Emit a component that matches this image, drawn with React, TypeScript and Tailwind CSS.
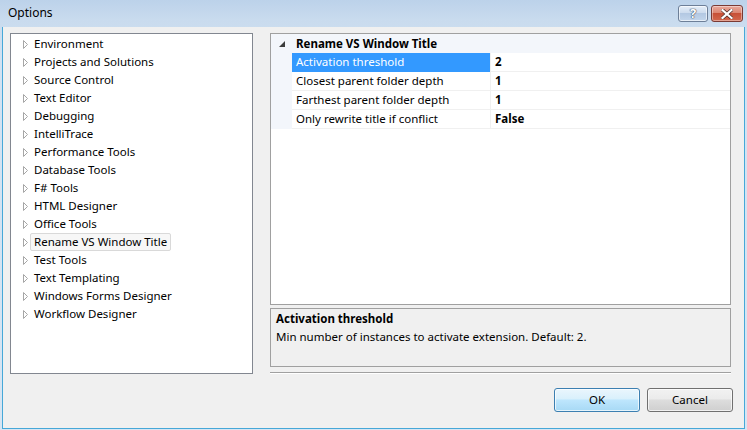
import React from "react";

const treeItems = [
  "Environment",
  "Projects and Solutions",
  "Source Control",
  "Text Editor",
  "Debugging",
  "IntelliTrace",
  "Performance Tools",
  "Database Tools",
  "F# Tools",
  "HTML Designer",
  "Office Tools",
  "Rename VS Window Title",
  "Test Tools",
  "Text Templating",
  "Windows Forms Designer",
  "Workflow Designer",
];

const props = [
  { name: "Activation threshold", value: "2", selected: true },
  { name: "Closest parent folder depth", value: "1" },
  { name: "Farthest parent folder depth", value: "1" },
  { name: "Only rewrite title if conflict", value: "False" },
];

function Expander() {
  return (
    <svg width="6" height="9" viewBox="0 0 6 9" className="shrink-0">
      <path d="M0.5 0.5 L4.5 4.5 L0.5 8.5 Z" fill="#ffffff" stroke="#a6a6a6" strokeWidth="1" />
    </svg>
  );
}

export default function App() {
  return (
    <div
      className="w-[747px] h-[430px] flex flex-col bg-[linear-gradient(180deg,#bcd2ea_0px,#c9dbee_20px,#d2e2f2_60px,#d7e5f3_430px)] text-[11.5px] text-black overflow-hidden"
      style={{ fontFamily: '"Noto Sans", "Segoe UI", sans-serif' }}
    >
      {/* title bar */}
      <div className="h-[27px] shrink-0 flex items-start relative">
        <span className="pl-[8px] pt-[5px] leading-[16px] text-[12px] text-black">Options</span>
        <div className="absolute left-[678px] top-[5px] w-[30px] h-[17px] rounded-[3px] border border-[#6d7f98] bg-[linear-gradient(180deg,#e5eef8_0%,#cddcee_45%,#b3c8e2_50%,#c3d6ec_100%)] flex items-center justify-center shadow-[inset_0_0_0_1px_rgba(255,255,255,0.6)]">
          <span className="text-[13px] font-bold leading-none text-white [text-shadow:0_0_1px_#3a4a60,0_0_1px_#3a4a60,0_0_1px_#3a4a60]">?</span>
        </div>
        <div className="absolute left-[711px] top-[5px] w-[32px] h-[17px] rounded-[3px] border border-[#7a3a34] bg-[linear-gradient(180deg,#e9a99c_0%,#dc8672_45%,#c75037_50%,#d3684e_100%)] flex items-center justify-center shadow-[inset_0_0_0_1px_rgba(255,255,255,0.4)]">
          <svg width="12" height="10" viewBox="0 0 12 10">
            <path d="M1.5 1 L10.5 9 M10.5 1 L1.5 9" stroke="#4a2a26" strokeWidth="3.6" strokeLinecap="square" />
            <path d="M1.5 1 L10.5 9 M10.5 1 L1.5 9" stroke="#ffffff" strokeWidth="2.2" strokeLinecap="square" />
          </svg>
        </div>
      </div>

      {/* client */}
      <div className="flex-1 mx-[2px] mb-[1px] border-l border-r border-b border-[#46a8d8] bg-[#f0f0f0] flex flex-col">
        <div className="flex pl-[7px] pt-[6px] gap-[17px]">
          {/* tree */}
          <div className="w-[243px] h-[341px] border border-[#828790] bg-white pt-[1px]">
            {treeItems.map((t) => {
              const sel = t === "Rename VS Window Title";
              return (
                <div key={t} className="h-[18px] flex items-center pl-[12px]">
                  <Expander />
                  <div
                    className={
                      "ml-[1px] h-[18px] flex items-center px-[3px] rounded-[2px] border " +
                      (sel ? "border-[#d9d9d9] bg-[#f7f7f7]" : "border-transparent")
                    }
                  >
                    <span className="whitespace-nowrap leading-[16px]">{t}</span>
                  </div>
                </div>
              );
            })}
          </div>

          {/* right */}
          <div className="w-[461px] flex flex-col">
            <div className="h-[272px] border border-[#a0a0a0] bg-white flex flex-col">
              <div className="h-[19px] bg-[#f3f6fb] flex items-center">
                <div className="w-[22px] flex justify-center">
                  <svg width="6" height="6" viewBox="0 0 6 6">
                    <path d="M6 0 L6 6 L0 6 Z" fill="#3c3c3c" />
                  </svg>
                </div>
                <span className="font-bold pl-[3px] leading-[16px]">Rename VS Window Title</span>
              </div>
              {props.map((p) => (
                <div key={p.name} className="h-[19px] flex">
                  <div className="w-[21px] bg-[#f3f6fb]" />
                  <div
                    className={
                      "w-[198px] flex items-center pl-[4px] border-b " +
                      (p.selected ? "bg-[#3399ff] text-white border-[#3399ff]" : "border-[#f0f0f0]")
                    }
                  >
                    <span className="whitespace-nowrap leading-[16px]">{p.name}</span>
                  </div>
                  <div className="flex-1 flex items-center pl-[4px] border-l border-b border-[#f0f0f0]">
                    <span className="font-bold leading-[16px]">{p.value}</span>
                  </div>
                </div>
              ))}
            </div>
            <div className="mt-[3px] h-[59px] border border-[#a0a0a0] bg-[#f0f0f0] px-[5px] pt-[1px]">
              <div className="font-bold leading-[17px]">Activation threshold</div>
              <div className="leading-[17px] mt-[1px]">Min number of instances to activate extension. Default: 2.</div>
            </div>
            <div className="mt-[5px] h-[2px] border-t border-[#a0a0a0] border-b border-b-white" />
          </div>
        </div>

        {/* buttons */}
        <div className="flex justify-end gap-[7px] pr-[11px] mt-[14px]">
          <div className="w-[86px] h-[24px] rounded-[3px] border border-[#3c7fb1] bg-[linear-gradient(180deg,#eaf6fd_0%,#d9f0fc_45%,#bee6fd_50%,#a7d9f5_100%)] shadow-[inset_0_0_0_1px_rgba(255,255,255,0.7)] flex items-center justify-center">
            <span className="leading-[16px]">OK</span>
          </div>
          <div className="w-[86px] h-[24px] rounded-[3px] border border-[#707070] bg-[linear-gradient(180deg,#f2f2f2_0%,#ebebeb_45%,#dddddd_50%,#cfcfcf_100%)] shadow-[inset_0_0_0_1px_rgba(255,255,255,0.7)] flex items-center justify-center">
            <span className="leading-[16px]">Cancel</span>
          </div>
        </div>
      </div>
    </div>
  );
}
